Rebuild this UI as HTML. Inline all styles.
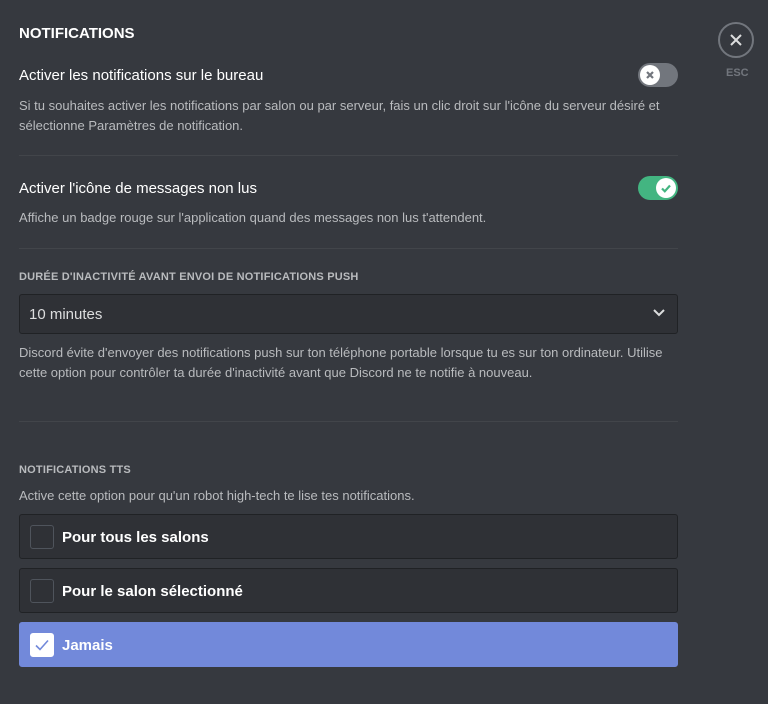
<!DOCTYPE html>
<html><head><meta charset="utf-8"><style>
*{margin:0;padding:0;box-sizing:border-box}
body{width:768px;height:704px;background:#36393f;font-family:"Liberation Sans",sans-serif;position:relative;overflow:hidden;color:#dcddde}
.a{position:absolute;white-space:nowrap}
.h{font-weight:bold;color:#fff;font-size:15px}
.t{font-size:15px;color:#fff}
.d{font-size:13px;color:#b9bbbe;line-height:20px}
.s{font-size:11px;font-weight:bold;color:#b9bbbe;letter-spacing:.2px}
.hr{position:absolute;left:19px;width:659px;height:1px;background:#42454a}
.row{position:absolute;left:19px;width:659px;height:45px;background:#2f3136;border:1px solid #202225;border-radius:3px}
.cb{position:absolute;left:10px;top:10px;width:24px;height:24px;border:1px solid #4f545c;border-radius:3px}
.row span{position:absolute;left:42px;top:14px;font-size:15px;font-weight:bold;color:#fff}
</style></head><body>
<div class="a h" style="left:19px;top:25px;font-size:15px">NOTIFICATIONS</div>
<div class="a t" style="left:19px;top:67px">Activer les notifications sur le bureau</div>
<div class="a d" style="left:19px;top:96px">Si tu souhaites activer les notifications par salon ou par serveur, fais un clic droit sur l'icône du serveur désiré et<br>sélectionne Paramètres de notification.</div>
<div class="a" style="left:638px;top:63px;width:40px;height:24px;border-radius:12px;background:#72767d"></div>
<div class="a" style="left:640px;top:65px;width:20px;height:20px;border-radius:10px;background:#fff"></div>
<svg class="a" style="left:644px;top:69px" width="12" height="12" viewBox="0 0 12 12"><path d="M3 3l6 6M9 3l-6 6" stroke="#72767d" stroke-width="2.2"/></svg>
<div class="hr" style="top:155px"></div>
<div class="a t" style="left:19px;top:180px">Activer l'icône de messages non lus</div>
<div class="a d" style="left:19px;top:208px">Affiche un badge rouge sur l'application quand des messages non lus t'attendent.</div>
<div class="a" style="left:638px;top:176px;width:40px;height:24px;border-radius:12px;background:#43b581"></div>
<div class="a" style="left:656px;top:178px;width:20px;height:20px;border-radius:10px;background:#fff"></div>
<svg class="a" style="left:660px;top:182px" width="12" height="12" viewBox="0 0 12 12"><path d="M2 6.5l2.8 2.8L10 3.5" stroke="#43b581" stroke-width="2.2" fill="none"/></svg>
<div class="hr" style="top:248px"></div>
<div class="a s" style="left:19px;top:271px">DURÉE D'INACTIVITÉ AVANT ENVOI DE NOTIFICATIONS PUSH</div>
<div class="a" style="left:19px;top:294px;width:659px;height:40px;background:#2f3136;border:1px solid #202225;border-radius:3px"></div>
<div class="a" style="left:29px;top:306px;font-size:15px;color:#dcddde">10 minutes</div>
<svg class="a" style="left:652px;top:307px" width="14" height="12" viewBox="0 0 14 12"><path d="M2 3l5 5 5-5" stroke="#dcddde" stroke-width="2" fill="none"/></svg>
<div class="a d" style="left:19px;top:343px">Discord évite d'envoyer des notifications push sur ton téléphone portable lorsque tu es sur ton ordinateur. Utilise<br>cette option pour contrôler ta durée d'inactivité avant que Discord ne te notifie à nouveau.</div>
<div class="hr" style="top:421px"></div>
<div class="a s" style="left:19px;top:464px">NOTIFICATIONS TTS</div>
<div class="a d" style="left:19px;top:486px">Active cette option pour qu'un robot high-tech te lise tes notifications.</div>
<div class="row" style="top:514px"><div class="cb"></div><span>Pour tous les salons</span></div>
<div class="row" style="top:568px"><div class="cb"></div><span>Pour le salon sélectionné</span></div>
<div class="row" style="top:622px;background:#7289da;border-color:#7289da"><div class="cb" style="background:#fff;border-color:#fff"><svg width="22" height="22" viewBox="0 0 22 22" style="position:absolute;left:0;top:0"><path d="M5 11.5l4 4 8-9" stroke="#7289da" stroke-width="1.6" fill="none"/></svg></div><span>Jamais</span></div>
<div class="a" style="left:718px;top:22px;width:36px;height:36px;border:2px solid #72767d;border-radius:50%"></div>
<svg class="a" style="left:728px;top:32px" width="16" height="16" viewBox="0 0 16 16"><path d="M3 3l10 10M13 3L3 13" stroke="#dcddde" stroke-width="2"/></svg>
<div class="a" style="left:726px;top:67px;font-size:11px;font-weight:bold;color:#72767d">ESC</div>
</body></html>
